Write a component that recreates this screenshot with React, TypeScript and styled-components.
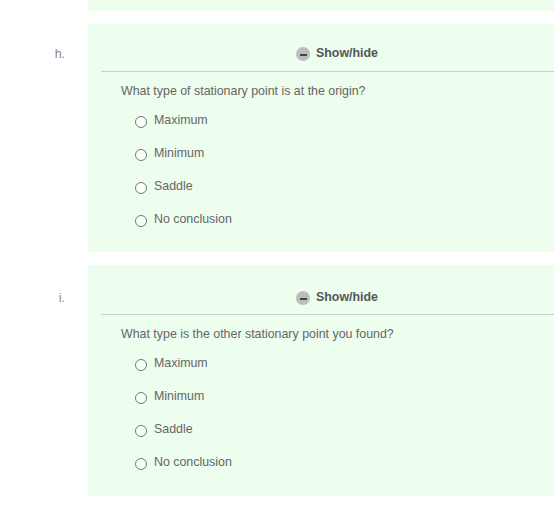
import React from "react";
import styled, { createGlobalStyle } from "styled-components";

const Global = createGlobalStyle`
  html, body {
    margin: 0;
    padding: 0;
    background: #ffffff;
    overflow: hidden;
  }
  body {
    font-family: "Liberation Sans", Arial, Helvetica, sans-serif;
    font-size: 12.4px;
    color: #666;
  }
`;

const Page = styled.div`
  display: flex;
  flex-direction: column;
  width: 554px;
`;

const PrevRow = styled.div`
  display: grid;
  grid-template-columns: 88px 1fr;
  height: 11px;
  margin-bottom: 13px;
`;

const Item = styled.div<{ $gap: number }>`
  display: grid;
  grid-template-columns: 88px 1fr;
  margin-bottom: ${(p) => p.$gap}px;
`;

const Label = styled.div<{ $top: number }>`
  text-align: right;
  padding-right: 23px;
  padding-top: ${(p) => p.$top}px;
  color: #888;
  line-height: 16px;
`;

const Card = styled.div<{ $height?: number }>`
  background: #edfdee;
  padding-left: 13px;
  box-sizing: border-box;
  ${(p) => (p.$height ? `height: ${p.$height}px;` : "")}
`;

const Header = styled.div<{ $height: number; $top: number }>`
  height: ${(p) => p.$height}px;
  border-bottom: 1px solid #c9cfc9;
  display: flex;
  align-items: flex-start;
  justify-content: center;
  gap: 6px;
  font-weight: bold;
  color: #555;
  line-height: 16px;
  box-sizing: border-box;
  padding: ${(p) => p.$top}px 0 0 19px;
`;

const Toggle = styled.span`
  width: 14px;
  height: 14px;
  border-radius: 50%;
  background: #bdbdbd;
  display: inline-flex;
  align-items: center;
  justify-content: center;
  margin-top: 2px;
  &::after {
    content: "";
    width: 7px;
    height: 2px;
    background: #444;
    margin-top: 1px;
  }
`;

const Body = styled.div`
  padding: 11px 0 0 20px;
`;

const Question = styled.div`
  line-height: 16px;
  color: #666;
  margin-bottom: 13px;
`;

const Options = styled.div`
  display: flex;
  flex-direction: column;
  gap: 17px;
  padding-left: 14px;
`;

const Option = styled.label`
  display: flex;
  align-items: flex-start;
  gap: 7px;
  line-height: 16px;
  color: #666;
`;

const Radio = styled.span`
  width: 12px;
  height: 12px;
  box-sizing: border-box;
  border-radius: 50%;
  border: 1.5px solid #777;
  background: #fbfffb;
  margin-top: 4px;
  flex: none;
`;

const OPTIONS = ["Maximum", "Minimum", "Saddle", "No conclusion"];

function Part({
  label,
  question,
  height,
  headerHeight,
  headerTop,
  gap,
}: {
  label: string;
  question: string;
  height: number;
  headerHeight: number;
  headerTop: number;
  gap: number;
}) {
  return (
    <Item $gap={gap}>
      <Label $top={headerTop + 1}>{label}</Label>
      <Card $height={height}>
        <Header $height={headerHeight} $top={headerTop}>
          <Toggle />
          <span>Show/hide</span>
        </Header>
        <Body>
          <Question>{question}</Question>
          <Options>
            {OPTIONS.map((o) => (
              <Option key={o}>
                <Radio />
                <span>{o}</span>
              </Option>
            ))}
          </Options>
        </Body>
      </Card>
    </Item>
  );
}

export default function App() {
  return (
    <>
      <Global />
      <Page>
        <PrevRow>
          <div />
          <Card />
        </PrevRow>
        <Part
          label="h."
          question="What type of stationary point is at the origin?"
          height={228}
          headerHeight={48}
          headerTop={21}
          gap={13}
        />
        <Part
          label="i."
          question="What type is the other stationary point you found?"
          height={231}
          headerHeight={50}
          headerTop={24}
          gap={0}
        />
      </Page>
    </>
  );
}
